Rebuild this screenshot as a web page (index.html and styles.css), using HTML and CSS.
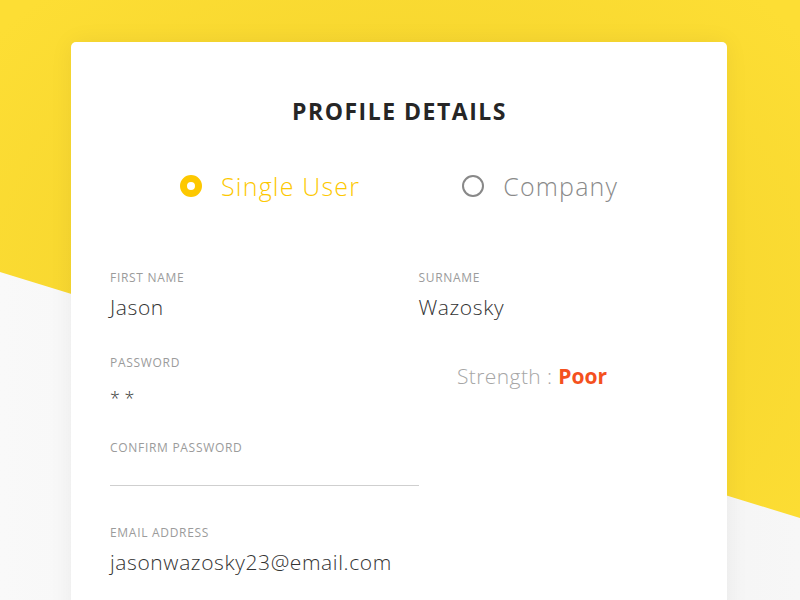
FILE: index.html
```html
<!DOCTYPE html>
<html lang="en">
<head>
<meta charset="utf-8">
<title>Profile Details</title>
<link rel="stylesheet" href="styles.css">
</head>
<body>
<div class="page">
  <div class="card">
    <h1 class="title">PROFILE DETAILS</h1>
    <div class="types">
      <div class="type type-active"><span class="radio radio-on"></span><span class="type-label">Single User</span></div>
      <div class="type"><span class="radio"></span><span class="type-label">Company</span></div>
    </div>
    <div class="form">
      <div class="row">
        <div class="field"><div class="label">FIRST NAME</div><div class="value">Jason</div></div>
        <div class="field"><div class="label">SURNAME</div><div class="value">Wazosky</div></div>
      </div>
      <div class="row">
        <div class="field"><div class="label">PASSWORD</div><div class="value value-pw">* *</div></div>
        <div class="strength">Strength : <b class="poor">Poor</b></div>
      </div>
      <div class="row">
        <div class="field field-line"><div class="label">CONFIRM PASSWORD</div><div class="value"></div></div>
      </div>
      <div class="row">
        <div class="field"><div class="label">EMAIL ADDRESS</div><div class="value">jasonwazosky23@email.com</div></div>
      </div>
    </div>
  </div>
</div>
</body>
</html>
```
FILE: styles.css
```css
html, body { margin: 0; padding: 0; }
body {
  width: 800px; height: 600px; overflow: hidden;
  font-family: "Open Sans", "Liberation Sans", sans-serif;
  background: radial-gradient(ellipse 520px 420px at 400px 300px, #f5d42e 0, #f8d830 60%, #fdde34 100%);
  background-color: #fdde34;
}
.page {
  width: 800px; height: 600px; overflow: hidden;
  position: relative;
}
.page::before {
  content: ""; position: absolute; left: 0; top: 0; width: 800px; height: 600px;
  background: linear-gradient(to right, #f9f9f9, #f1f1f1 60%, #f7f7f7);
  clip-path: polygon(0 272px, 800px 518px, 800px 600px, 0 600px);
}
.card {
  position: relative;
  margin-left: 71px; width: 656px; top: 42px; height: 600px;
  background: #fff; border-radius: 5px 5px 0 0;
  box-shadow: 0 0 24px rgba(0,0,0,0.06);
  box-sizing: border-box;
  padding-top: 57px;
}
.title {
  margin: 0; text-align: center;
  font-size: 23px; font-weight: 700; color: #262626; letter-spacing: 1.5px; line-height: 24px;
  padding-left: 1px;
}
.types { display: flex; margin-top: 48px; padding-left: 109px; }
.type { display: flex; align-items: center; height: 30px; }
.type + .type { margin-left: 102px; }
.type-label { font-size: 25px; font-weight: 300; color: #8a8a8a; margin-left: 19px; letter-spacing: 1.2px; }
.type-active .type-label { color: #fdc800; }
.radio {
  width: 22px; height: 22px; box-sizing: border-box; border-radius: 50%;
  border: 2px solid #888;
}
.radio-on { border: 7px solid #fdc800; background: #fff; }
.form { padding: 69px 0 0 39px; }
.row { display: flex; align-items: flex-start; height: 85px; }
.field { width: 309px; }
.label { font-size: 12px; color: #9b9b9b; letter-spacing: 0.7px; line-height: 16px; }
.value { font-size: 21px; font-weight: 300; color: #333; line-height: 28px; margin-top: 7px; letter-spacing: 0.6px; }
.value-pw { font-size: 18px; margin-top: 13px; letter-spacing: 0; }
.field-line .value { height: 22px; border-bottom: 1px solid #cfcfcf; }
.strength { margin-left: 38px; margin-top: 7px; font-size: 21px; line-height: 28px; font-weight: 300; color: #a6a6a6; letter-spacing: 0.4px; }
.poor { color: #f4511e; font-weight: 700; letter-spacing: 0; }
```
